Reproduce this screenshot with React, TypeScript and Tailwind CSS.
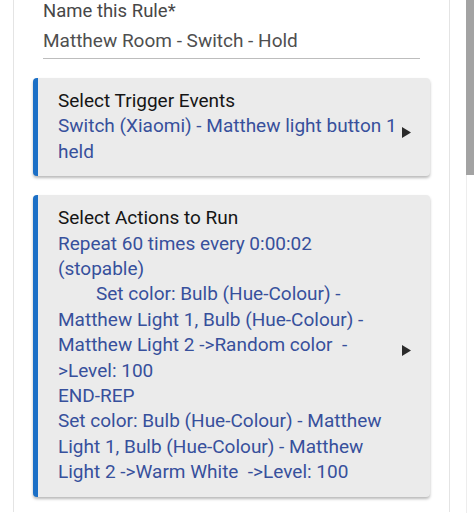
const triggerLines = ["Switch (Xiaomi) - Matthew light button 1", "held"];

const actionLines = [
  "Repeat 60 times every 0:00:02",
  "(stopable)",
  "INDENT",
  "Matthew Light 1, Bulb (Hue-Colour) -",
  "Matthew Light 2 ->Random color\u00a0 -",
  ">Level: 100",
  "END-REP",
  "Set color: Bulb (Hue-Colour) - Matthew",
  "Light 1, Bulb (Hue-Colour) - Matthew",
  "Light 2 ->Warm White\u00a0 ->Level: 100",
];

function Arrow() {
  return (
    <svg width="9" height="11" viewBox="0 0 9 11" className="shrink-0">
      <path d="M0 0 L9 5.5 L0 11 Z" fill="#2b2b2b" />
    </svg>
  );
}

function RuleCard({ title, lines }: { title: string; lines: string[] }) {
  return (
    <div className="flex items-center rounded-[4px] border-l-[5px] border-[#1b6fc6] bg-[#ebebeb] shadow-[0_2px_3px_rgba(0,0,0,0.28)] pl-[20px] pr-[19px] pt-[10px] pb-[12px]">
      <div className="flex-1 leading-[25.4px] text-[19px]">
        <div className="text-[#151515]">{title}</div>
        {lines.map((line, i) =>
          line === "INDENT" ? (
            <div key={i} className="text-[#37509c]">
              <span className="inline-block w-[38px]" />
              Set color: Bulb (Hue-Colour) -
            </div>
          ) : (
            <div key={i} className="text-[#37509c]">
              {line}
            </div>
          )
        )}
      </div>
      <div className="mt-[12px]">
        <Arrow />
      </div>
    </div>
  );
}

export default function App() {
  return (
    <div
      className="flex h-[513px] w-[474px] overflow-hidden bg-white"
      style={{ fontFamily: "Roboto, 'Noto Sans', sans-serif" }}
    >
      <div className="flex-1">
        <div className="ml-[13px] h-full w-[437px] border-x border-[#e4e4e4] px-[19px]">
          <div className="pl-[10px] pr-[10px]">
            <div className="text-[18.5px] leading-[24px] text-[#474747] -mt-[1px]">Name this Rule*</div>
            <div className="mt-[5px] border-b border-[#bdbdbd] pb-[5px] text-[19px] leading-[25px] text-[#4f4f4f]">
              Matthew Room - Switch - Hold
            </div>
          </div>
          <div className="mt-[19px] flex flex-col gap-[19px]">
            <RuleCard title="Select Trigger Events" lines={triggerLines} />
            <RuleCard title="Select Actions to Run" lines={actionLines} />
          </div>
        </div>
      </div>
      <div className="flex w-[8px] flex-col">
        <div className="h-[175px] bg-[#a3a3a3]" />
        <div className="flex-1 border-l border-[#ededed] bg-white" />
      </div>
    </div>
  );
}
